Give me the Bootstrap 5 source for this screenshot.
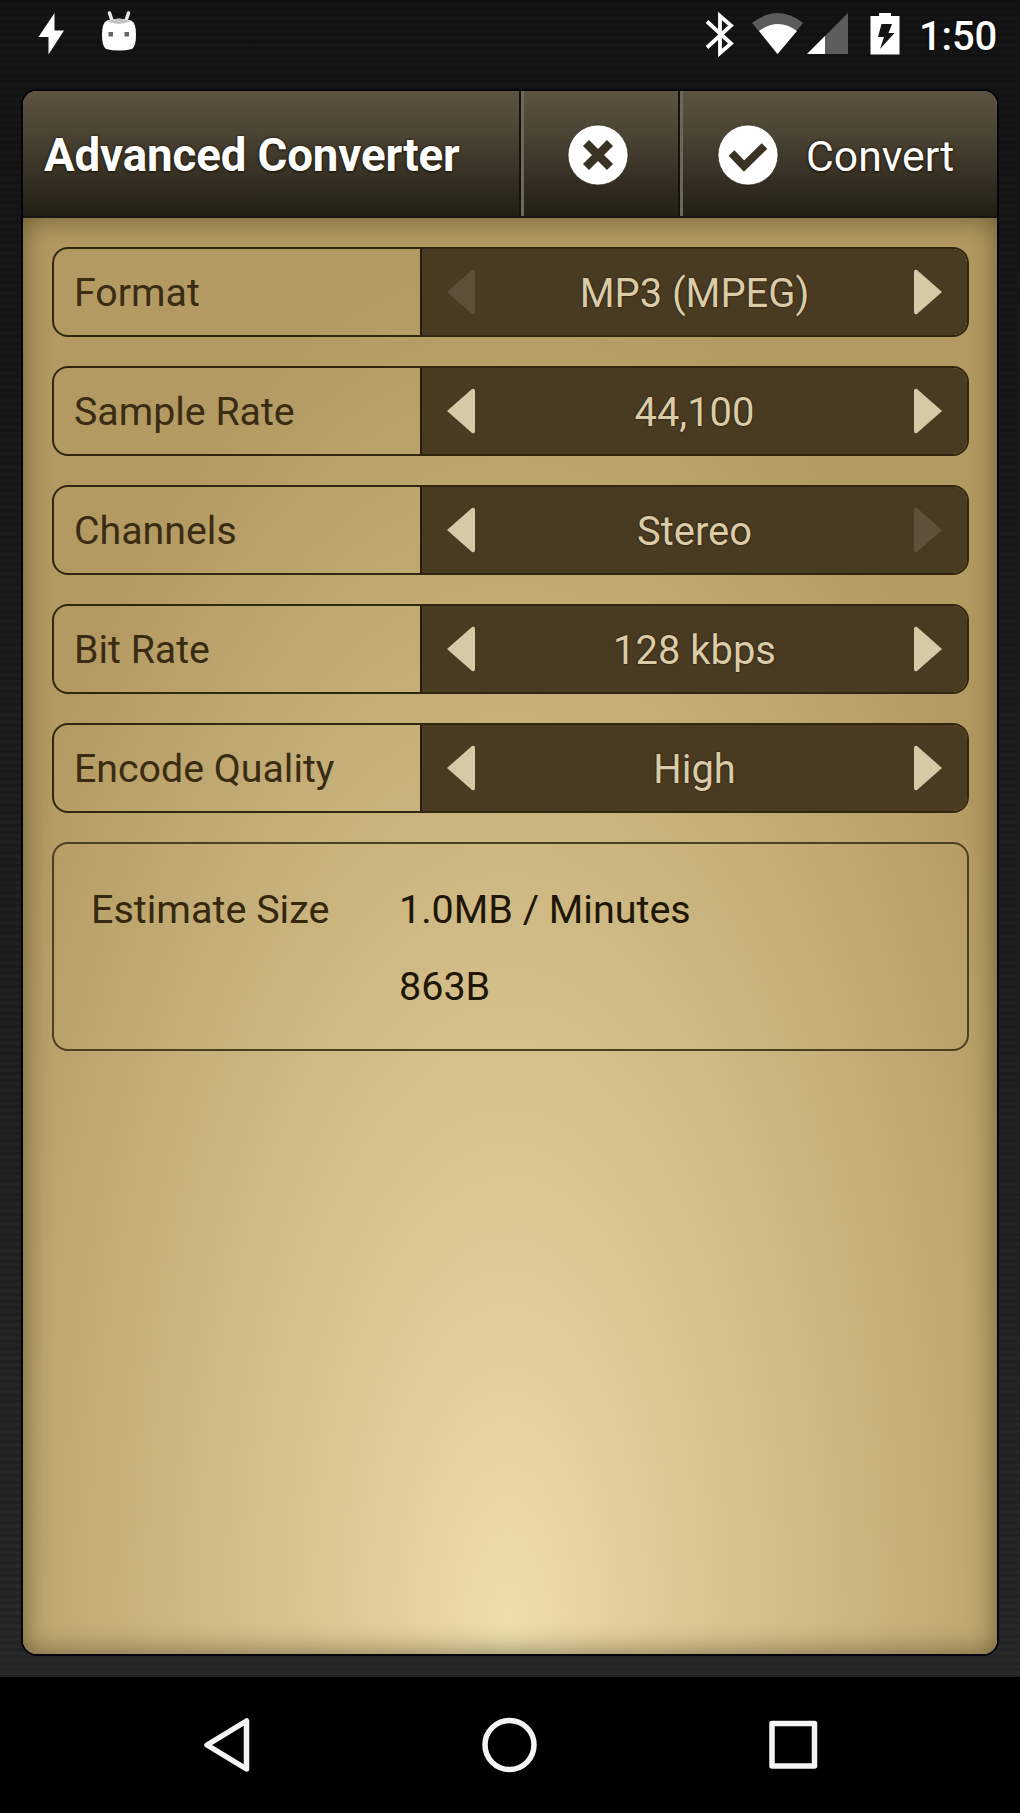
<!DOCTYPE html>
<html lang="en">
<head>
<meta charset="utf-8">
<meta name="viewport" content="width=device-width, initial-scale=1">
<title>Advanced Converter</title>
<link href="https://cdn.jsdelivr.net/npm/bootstrap@5.3.0/dist/css/bootstrap.min.css" rel="stylesheet">
<style>
  body { width: 1020px; height: 1813px; overflow: hidden; background: #000; font-family: Roboto, "Liberation Sans", sans-serif; font-size: 39.5px; line-height: 1; }
  svg { display: block; flex: none; }
  .phone-screen { height: 1677px; background: repeating-linear-gradient(to bottom, rgba(0,0,0,.13) 0 3px, rgba(0,0,0,0) 3px 6.7px), linear-gradient(#141414, #282828); }
  .status-bar { height: 91px; padding: 0 23px 0 36px; color: #fff; }
  .status-bar svg { height: 70px; }
  .clock { font-weight: 500; font-size: 40px; line-height: 73px; letter-spacing: -.2px; text-shadow: 0 0 3px #000; }
  .panel { width: 974px; height: 1563px; margin-left: 23px; border-radius: 14px; overflow: hidden; box-shadow: 0 0 0 2px #02030f; background: #b39a62; }
  .title-bar { height: 127px; background: linear-gradient(#5c5341, #4e4635 30%, #231e15); color: #fff; border-bottom: 2px solid #171611; text-shadow: 0 0 3px #1d1708, 0 1px 2px #1d1708; }
  .title-text { width: 498px; padding-left: 21px; padding-top: 5px; font-weight: 700; font-size: 45.600px; letter-spacing: -.1px; border-right: 2px solid #15120c; }
  .bar-btn { border: 0; border-left: 3px solid #6d6757; border-radius: 0; padding: 0; color: #fff; font-size: 42.700px; line-height: 1; text-shadow: inherit; }
  .close-btn { width: 159px; border-right: 2px solid #15120c; padding: 2px 6px 0 0; }
  .convert-btn { padding: 2px 0 0 34px; gap: 27px; }
  .convert-btn span { padding-top: 3px; }
  .panel-body { height: 1436px; padding: 29px 29px; gap: 29px; box-shadow: inset 0 0 28px rgba(50,40,15,.58); background: radial-gradient(ellipse 590px 1380px at 49.8% 98.5%, #eedfae, #e3cf9c 19%, #b39a62); }
  .option-row { width: 917px; height: 90px; border-radius: 16px; border: 2px solid #31260f; overflow: hidden; flex: none; color: #3a2c12; }
  .option-label { width: 366px; padding: 3px 0 0 20px; font-size: 39.300px; }
  .option-value { background: #493a22; color: #d9cca6; border-left: 2px solid #2a1c08; padding: 0 25px; text-shadow: 0 0 2px #1c0b00; font-size: 39.900px; }
  .option-value span { padding-top: 4px; }
  .arrow { fill: #d5c9a6; }
  .arrow.off { fill: #5f5139; }
  .size-box { width: 917px; height: 209px; border: 2px solid #4d3f22; border-radius: 16px; padding: 28px 37px; color: #35280f; flex: none; }
  .size-label { width: 308px; line-height: 76px; }
  .size-values { line-height: 76.500px; color: #1e1607; }
  .nav-keys { height: 136px; }
</style>
</head>
<body>
<div class="phone-screen">
  <div class="status-bar d-flex justify-content-between align-items-start">
    <div class="d-flex">
      <svg width="64" viewBox="36 0 64 70"><path d="M54.500 13v17.500h9.500L48.500 54.500V37H38.500z" fill="#fff"/></svg>
      <svg width="40" viewBox="100 0 40 70"><path d="M109.500 13l3 9M128.500 13l-3 9" stroke="#e8e8e8" stroke-width="3.500" stroke-linecap="round"/><path d="M107 20.500q12-3.500 24 0 5 2 5 14 0 12-4 14.500-13 3-26 0-4-2.500-4-14.500 0-12 5-14z" fill="#fff"/><path d="M107 21q12-5 24 0-12 6-24 0z" fill="#c4c4c4"/><path d="M108.500 32h4.500v4.500h-4.500zM124.500 32h4.500v4.500h-4.500z" fill="#666"/></svg>
    </div>
    <div class="d-flex">
      <svg width="217" viewBox="702 0 217 70">
        <path d="M707 21.500l24 22-11 9.500V16l11 9.500-24 22" fill="none" stroke="#fff" stroke-width="3.800"/>
        <path d="M752 23q26-20 51 0l-25.500 31z" fill="#5c5c5c"/><path d="M759 31q19-14 38 0l-19.500 23z" fill="#fff"/>
        <path d="M848 13v41h-41z" fill="#5c5c5c"/><path d="M825 36v18h-18z" fill="#fff"/>
        <path d="M879 13h12v3h8.500v38.500h-29V16H879z" fill="#fff"/><path d="M881.500 24H892l-3.500 9h6L880 49l4-12h-6z" fill="#151515"/>
      </svg>
      <span class="clock">1:50</span>
    </div>
  </div>
  <main class="panel">
    <header class="title-bar d-flex">
      <div class="title-text d-flex align-items-center text-nowrap">Advanced Converter</div>
      <button class="btn bar-btn close-btn d-flex align-items-center justify-content-center" aria-label="Close">
        <svg width="64" height="64" viewBox="-32 -32 64 64"><circle r="30" fill="#fff" stroke="#1d1708" stroke-opacity=".6"/><path d="M-12-12L12 12M12-12L-12 12" stroke="#3a3223" stroke-width="8.500"/></svg>
      </button>
      <button class="btn bar-btn convert-btn d-flex align-items-center">
        <svg width="62" height="64" viewBox="-31 -32 62 64"><circle r="30" fill="#fff" stroke="#1d1708" stroke-opacity=".6"/><path d="M-16.500-2L-4 11 16.500-9" fill="none" stroke="#3a3223" stroke-width="8"/></svg>
        <span>Convert</span>
      </button>
    </header>
    <section class="panel-body d-flex flex-column">
      <div class="option-row d-flex"><div class="option-label d-flex align-items-center">Format</div><div class="option-value flex-fill d-flex align-items-center justify-content-between"><svg width="28" height="46"><path class="arrow off" d="M0 23L25 1q3-1 3 2v40q0 3-3 2z"/></svg><span>MP3 (MPEG)</span><svg width="28" height="46"><path class="arrow" d="M28 23L3 1Q0 0 0 3v40q0 3 3 2z"/></svg></div></div>
      <div class="option-row d-flex"><div class="option-label d-flex align-items-center">Sample Rate</div><div class="option-value flex-fill d-flex align-items-center justify-content-between"><svg width="28" height="46"><path class="arrow" d="M0 23L25 1q3-1 3 2v40q0 3-3 2z"/></svg><span>44,100</span><svg width="28" height="46"><path class="arrow" d="M28 23L3 1Q0 0 0 3v40q0 3 3 2z"/></svg></div></div>
      <div class="option-row d-flex"><div class="option-label d-flex align-items-center">Channels</div><div class="option-value flex-fill d-flex align-items-center justify-content-between"><svg width="28" height="46"><path class="arrow" d="M0 23L25 1q3-1 3 2v40q0 3-3 2z"/></svg><span>Stereo</span><svg width="28" height="46"><path class="arrow off" d="M28 23L3 1Q0 0 0 3v40q0 3 3 2z"/></svg></div></div>
      <div class="option-row d-flex"><div class="option-label d-flex align-items-center">Bit Rate</div><div class="option-value flex-fill d-flex align-items-center justify-content-between"><svg width="28" height="46"><path class="arrow" d="M0 23L25 1q3-1 3 2v40q0 3-3 2z"/></svg><span>128 kbps</span><svg width="28" height="46"><path class="arrow" d="M28 23L3 1Q0 0 0 3v40q0 3 3 2z"/></svg></div></div>
      <div class="option-row d-flex"><div class="option-label d-flex align-items-center">Encode Quality</div><div class="option-value flex-fill d-flex align-items-center justify-content-between"><svg width="28" height="46"><path class="arrow" d="M0 23L25 1q3-1 3 2v40q0 3-3 2z"/></svg><span>High</span><svg width="28" height="46"><path class="arrow" d="M28 23L3 1Q0 0 0 3v40q0 3 3 2z"/></svg></div></div>
      <div class="size-box d-flex"><div class="size-label">Estimate Size</div><div class="size-values"><div>1.0MB / Minutes</div><div>863B</div></div></div>
    </section>
  </main>
</div>
<nav class="nav-keys">
  <svg width="1020" height="136" viewBox="0 1677 1020 136" fill="none" stroke="#f4f4f4" stroke-width="5.500" stroke-linejoin="round"><path d="M246.500 1721v48L207 1745z"/><circle cx="509.500" cy="1745" r="24.500"/><rect x="772" y="1723.500" width="42.500" height="42.500"/></svg>
</nav>
<script src="https://cdn.jsdelivr.net/npm/bootstrap@5.3.0/dist/js/bootstrap.bundle.min.js"></script>
</body>
</html>
